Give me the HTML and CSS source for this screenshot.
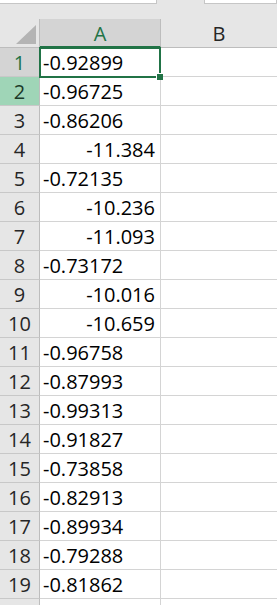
FILE: index.html
```html
<!DOCTYPE html>
<html lang="en">
<head>
  <meta charset="UTF-8" />
  <meta name="viewport" content="width=device-width, initial-scale=1.0"/>
  <title>Sheet1</title>
  <link rel="stylesheet" href="styles.css">
</head>
<body>
  <div class="topbar">
    <div class="namebox"></div>
    <div class="formulabox"></div>
  </div>

  <div class="sheet">
    <div class="row head">
      <div class="rowhead corner"><span class="tri"></span></div>
      <div class="cell colhead active">A</div>
      <div class="cell colhead last">B</div>
    </div>

    <div class="row"><div class="rowhead current">1</div><div class="cell selected">-0.92899</div><div class="cell last"></div></div>
    <div class="row"><div class="rowhead hover">2</div><div class="cell">-0.96725</div><div class="cell last"></div></div>
    <div class="row"><div class="rowhead">3</div><div class="cell">-0.86206</div><div class="cell last"></div></div>
    <div class="row"><div class="rowhead">4</div><div class="cell num">-11.384</div><div class="cell last"></div></div>
    <div class="row"><div class="rowhead">5</div><div class="cell">-0.72135</div><div class="cell last"></div></div>
    <div class="row"><div class="rowhead">6</div><div class="cell num">-10.236</div><div class="cell last"></div></div>
    <div class="row"><div class="rowhead">7</div><div class="cell num">-11.093</div><div class="cell last"></div></div>
    <div class="row"><div class="rowhead">8</div><div class="cell">-0.73172</div><div class="cell last"></div></div>
    <div class="row"><div class="rowhead">9</div><div class="cell num">-10.016</div><div class="cell last"></div></div>
    <div class="row"><div class="rowhead">10</div><div class="cell num">-10.659</div><div class="cell last"></div></div>
    <div class="row"><div class="rowhead">11</div><div class="cell">-0.96758</div><div class="cell last"></div></div>
    <div class="row"><div class="rowhead">12</div><div class="cell">-0.87993</div><div class="cell last"></div></div>
    <div class="row"><div class="rowhead">13</div><div class="cell">-0.99313</div><div class="cell last"></div></div>
    <div class="row"><div class="rowhead">14</div><div class="cell">-0.91827</div><div class="cell last"></div></div>
    <div class="row"><div class="rowhead">15</div><div class="cell">-0.73858</div><div class="cell last"></div></div>
    <div class="row"><div class="rowhead">16</div><div class="cell">-0.82913</div><div class="cell last"></div></div>
    <div class="row"><div class="rowhead">17</div><div class="cell">-0.89934</div><div class="cell last"></div></div>
    <div class="row"><div class="rowhead">18</div><div class="cell">-0.79288</div><div class="cell last"></div></div>
    <div class="row"><div class="rowhead">19</div><div class="cell">-0.81862</div><div class="cell last"></div></div>
    <div class="row"><div class="rowhead"></div><div class="cell"></div><div class="cell last"></div></div>
  </div>
</body>
</html>
```

FILE: styles.css
```css
body {
  margin: 0;
  background: #e6e6e6;
  font-family: "Open Sans", "Liberation Sans", sans-serif;
  font-size: 20px;
  color: #000;
  overflow: hidden;
}

.topbar {
  height: 19px;
  display: flex;
  align-items: flex-start;
}

.namebox {
  width: 157px;
  height: 3px;
  background: #fff;
  border-right: 1px solid #c6c6c6;
  border-bottom: 1px solid #c6c6c6;
}

.formulabox {
  margin-left: 47px;
  width: 71px;
  height: 3px;
  background: #fff;
  border: 1px solid #c6c6c6;
  border-top: none;
}

.sheet {
  background: #fff;
}

.row {
  display: flex;
  height: 29px;
}

.rowhead {
  width: 39px;
  flex: none;
  background: #e6e6e6;
  border-right: 1px solid #bdbdbd;
  border-bottom: 1px solid #c8c8c8;
  color: #262626;
  text-align: center;
  line-height: 30px;
}

.rowhead.current {
  background: #d4d4d4;
  color: #217346;
}

.rowhead.hover {
  background: #9fd5b7;
  color: #1b3a29;
}

.cell {
  width: 114px;
  flex: none;
  padding: 0 3px;
  border-right: 1px solid #d4d4d4;
  border-bottom: 1px solid #d4d4d4;
  line-height: 30px;
  white-space: nowrap;
}

.cell.last {
  flex: 1;
  border-right: none;
}

.cell.num {
  text-align: right;
  padding-right: 5px;
  width: 112px;
}

.cell.selected {
  position: relative;
}

.cell.selected::after {
  content: "";
  position: absolute;
  top: -1px;
  left: -1px;
  right: -1px;
  bottom: -2px;
  border: 2px solid #217346;
}

.cell.selected::before {
  content: "";
  position: absolute;
  right: -3px;
  bottom: -4px;
  width: 6px;
  height: 6px;
  background: #217346;
  border-left: 1px solid #fff;
  border-top: 1px solid #fff;
  z-index: 1;
}

.head .rowhead,
.head .cell {
  background: #e6e6e6;
  border-bottom: 1px solid #bdbdbd;
}

.corner {
  position: relative;
}

.tri {
  position: absolute;
  right: 3px;
  bottom: 3px;
  width: 0;
  height: 0;
  border-left: 20px solid transparent;
  border-bottom: 19px solid #b4b4b4;
}

.colhead {
  text-align: center;
  color: #262626;
  border-right: 1px solid #d0d0d0;
}

.head .colhead.active {
  background: #d4d4d4;
  color: #217346;
  border-bottom: 2px solid #217346;
  height: 27px;
  border-right: 1px solid #bdbdbd;
}
```
